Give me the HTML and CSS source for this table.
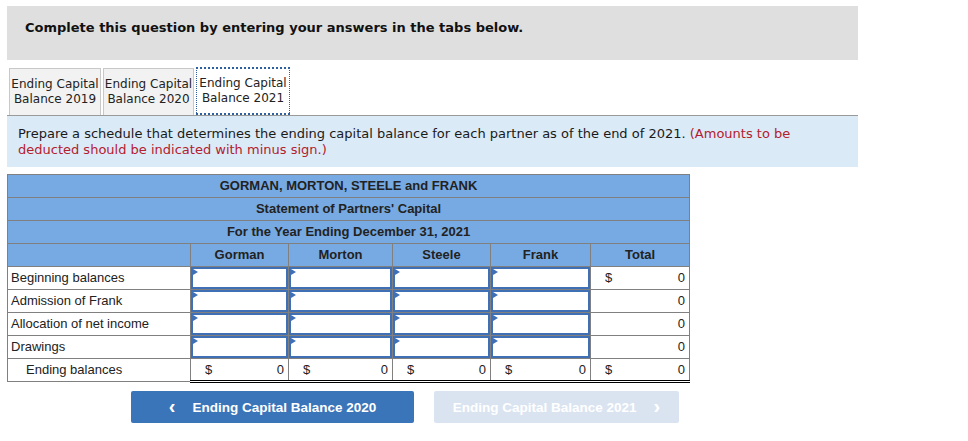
FILE: index.html
```html
<!DOCTYPE html>
<html>
<head>
<meta charset="utf-8">
<link rel="stylesheet" href="styles.css">
</head>
<body>
<div class="page">
  <div class="banner">Complete this question by entering your answers in the tabs below.</div>

  <div class="tabs">
    <div class="tab">Ending Capital<br>Balance 2019</div>
    <div class="tab">Ending Capital<br>Balance 2020</div>
    <div class="tab active">Ending Capital<br>Balance 2021</div>
  </div>

  <div class="instr">Prepare a schedule that determines the ending capital balance for each partner as of the end of 2021. <span class="red">(Amounts to be deducted should be indicated with minus sign.)</span></div>

  <table class="sheet">
    <colgroup>
      <col class="c-label"><col class="c-g"><col class="c-m"><col class="c-s"><col class="c-f"><col class="c-t">
    </colgroup>
    <tr class="title"><td colspan="6">GORMAN, MORTON, STEELE and FRANK</td></tr>
    <tr class="title"><td colspan="6">Statement of Partners' Capital</td></tr>
    <tr class="title"><td colspan="6">For the Year Ending December 31, 2021</td></tr>
    <tr class="title heads"><td></td><td>Gorman</td><td>Morton</td><td>Steele</td><td>Frank</td><td>Total</td></tr>
    <tr>
      <td class="lbl">Beginning balances</td>
      <td class="inp"><div class="box"><span class="flag"></span></div></td>
      <td class="inp"><div class="box"><span class="flag"></span></div></td>
      <td class="inp"><div class="box"><span class="flag"></span></div></td>
      <td class="inp"><div class="box"><span class="flag"></span></div></td>
      <td class="num"><span class="cur">$</span><span>0</span></td>
    </tr>
    <tr>
      <td class="lbl">Admission of Frank</td>
      <td class="inp"><div class="box"><span class="flag"></span></div></td>
      <td class="inp"><div class="box"><span class="flag"></span></div></td>
      <td class="inp"><div class="box"><span class="flag"></span></div></td>
      <td class="inp"><div class="box"><span class="flag"></span></div></td>
      <td class="num"><span class="cur"></span><span>0</span></td>
    </tr>
    <tr>
      <td class="lbl">Allocation of net income</td>
      <td class="inp"><div class="box"><span class="flag"></span></div></td>
      <td class="inp"><div class="box"><span class="flag"></span></div></td>
      <td class="inp"><div class="box"><span class="flag"></span></div></td>
      <td class="inp"><div class="box"><span class="flag"></span></div></td>
      <td class="num"><span class="cur"></span><span>0</span></td>
    </tr>
    <tr>
      <td class="lbl">Drawings</td>
      <td class="inp"><div class="box"><span class="flag"></span></div></td>
      <td class="inp"><div class="box"><span class="flag"></span></div></td>
      <td class="inp"><div class="box"><span class="flag"></span></div></td>
      <td class="inp"><div class="box"><span class="flag"></span></div></td>
      <td class="num"><span class="cur"></span><span>0</span></td>
    </tr>
    <tr class="final">
      <td class="lbl indent">Ending balances</td>
      <td class="num"><span class="cur">$</span><span>0</span></td>
      <td class="num"><span class="cur">$</span><span>0</span></td>
      <td class="num"><span class="cur">$</span><span>0</span></td>
      <td class="num"><span class="cur">$</span><span>0</span></td>
      <td class="num"><span class="cur">$</span><span>0</span></td>
    </tr>
  </table>

  <div class="nav">
    <div class="btn prev"><span class="chev">&#8249;</span>Ending Capital Balance 2020</div>
    <div class="btn next">Ending Capital Balance 2021<span class="chev">&#8250;</span></div>
  </div>
</div>
</body>
</html>
```

FILE: styles.css
```css
html, body {
  margin: 0;
  padding: 0;
  background: #ffffff;
}

.page {
  width: 851px;
  margin: 6px 0 0 7px;
  font-family: "DejaVu Sans", Verdana, sans-serif;
  color: #111;
}

.banner {
  height: 54px;
  background: #dfdfdf;
  box-sizing: border-box;
  padding: 14px 0 0 18px;
  font-size: 13px;
  font-weight: bold;
  line-height: 16px;
}

.tabs {
  display: flex;
  gap: 2px;
  padding: 7px 0 0 2px;
  border-bottom: 1px solid #9a9a9a;
  align-items: flex-end;
}

.tab {
  width: 91px;
  height: 47px;
  background: #f2f2f2;
  border: 1px solid #c8c8c8;
  border-bottom: none;
  font-size: 12px;
  line-height: 15px;
  text-align: center;
  color: #222;
  box-sizing: border-box;
  display: flex;
  align-items: center;
  justify-content: center;
  white-space: nowrap;
}

.tab:first-child { width: 92px; }

.tab.active {
  width: 94px;
  height: 48px;
  background: #ffffff;
  border: 1px dotted #2e5f9e;
  border-width: 2px 1px 2px 1px;
}

.instr {
  background: #dbeaf7;
  padding: 10px 11px 9px 11px;
  font-size: 13px;
  line-height: 16px;
  color: #1a1a1a;
}

.red { color: #b3202e; }

.sheet {
  margin-top: 7px;
  border-collapse: collapse;
  width: 682px;
  table-layout: fixed;
  font-family: "Liberation Sans", Arial, sans-serif;
  font-size: 13px;
  color: #222;
}

.c-label { width: 183px; }
.c-g { width: 98px; }
.c-m { width: 104px; }
.c-s { width: 98px; }
.c-f { width: 100px; }
.c-t { width: 99px; }

.sheet td {
  border: 1px solid #808080;
  height: 22px;
  padding: 0;
  box-sizing: border-box;
  line-height: 16px;
}

.sheet tr { height: 23px; }

.title td {
  background: #77aae3;
  text-align: center;
  font-weight: bold;
}

.lbl {
  padding-left: 3px !important;
  background: #ffffff;
}

.indent { padding-left: 18px !important; }

.inp {
  background: #fff;
}

.box {
  position: relative;
  height: 22px;
  border: 2px solid #3f70b5;
  box-sizing: border-box;
  background: #fff;
}

.flag {
  position: absolute;
  left: 0;
  top: 0;
  width: 0;
  height: 0;
  border-top: 3px solid transparent;
  border-bottom: 3px solid transparent;
  border-left: 5px solid #3f70b5;
}

.num {
  padding: 0 4px 0 14px !important;
}

.num span { display: inline-block; }
.num .cur { width: 60px; }
.num span:last-child { float: right; }

.final td.num {
  border-bottom: 3px double #000;
}

.nav {
  display: flex;
  gap: 20px;
  margin: 8px 0 0 124px;
}

.btn {
  height: 32px;
  border-radius: 2px;
  font-family: "Liberation Sans", Arial, sans-serif;
  font-weight: bold;
  font-size: 13.5px;
  color: #fff;
  display: flex;
  align-items: center;
  justify-content: center;
}

.prev {
  width: 283px;
  background: #3a75ba;
}

.prev .chev { margin-right: 17px; }

.next {
  width: 245px;
  background: #dae4f1;
}

.next .chev { margin-left: 17px; }

.chev {
  font-size: 20px;
  line-height: 20px;
  margin-top: -3px;
}
```
